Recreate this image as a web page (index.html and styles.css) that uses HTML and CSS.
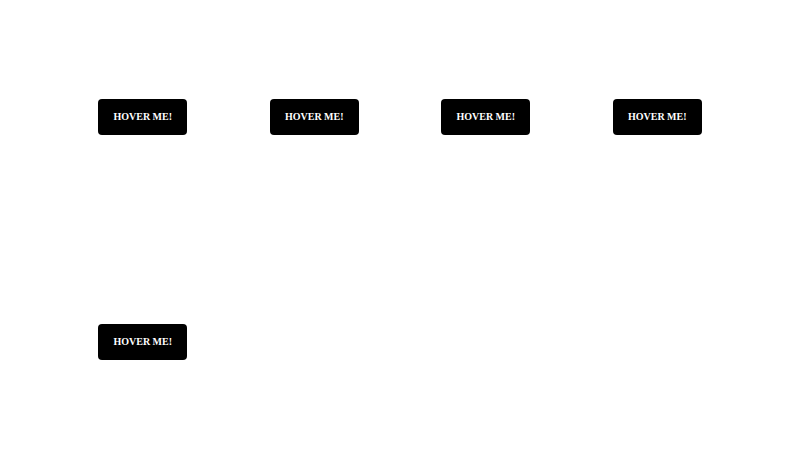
FILE: index.html
```html
<!DOCTYPE html>
<html>

<head>
    <title>Hover Buttons</title>
    <meta name="viewport" content="width=device-width, initial-scale=1">
    <link rel="stylesheet" href="styles.css">
</head>

<body>
    <div class="grid">
        <div class="cell"><button class="btn">HOVER ME!</button></div>
        <div class="cell"><button class="btn">HOVER ME!</button></div>
        <div class="cell"><button class="btn">HOVER ME!</button></div>
        <div class="cell"><button class="btn">HOVER ME!</button></div>
        <div class="cell"><button class="btn">HOVER ME!</button></div>
    </div>
</body>

</html>
```

FILE: styles.css
```css
body {
    margin: 0;
    background: #fff;
    font-family: "Liberation Serif", "Times New Roman", serif;
}

.grid {
    display: grid;
    grid-template-columns: repeat(4, 1fr);
    grid-auto-rows: 200px;
    gap: 25px;
    padding: 17px 69.5px;
}

.cell {
    display: flex;
    align-items: center;
    justify-content: center;
}

.btn {
    font-family: "Liberation Serif", "Times New Roman", serif;
    font-size: 10px;
    font-weight: bold;
    color: #fff;
    background: #000;
    border: none;
    border-radius: 4px;
    padding: 12px 15px;
    line-height: 12px;
    cursor: pointer;
}

.btn:hover {
    background: #333;
}
```
